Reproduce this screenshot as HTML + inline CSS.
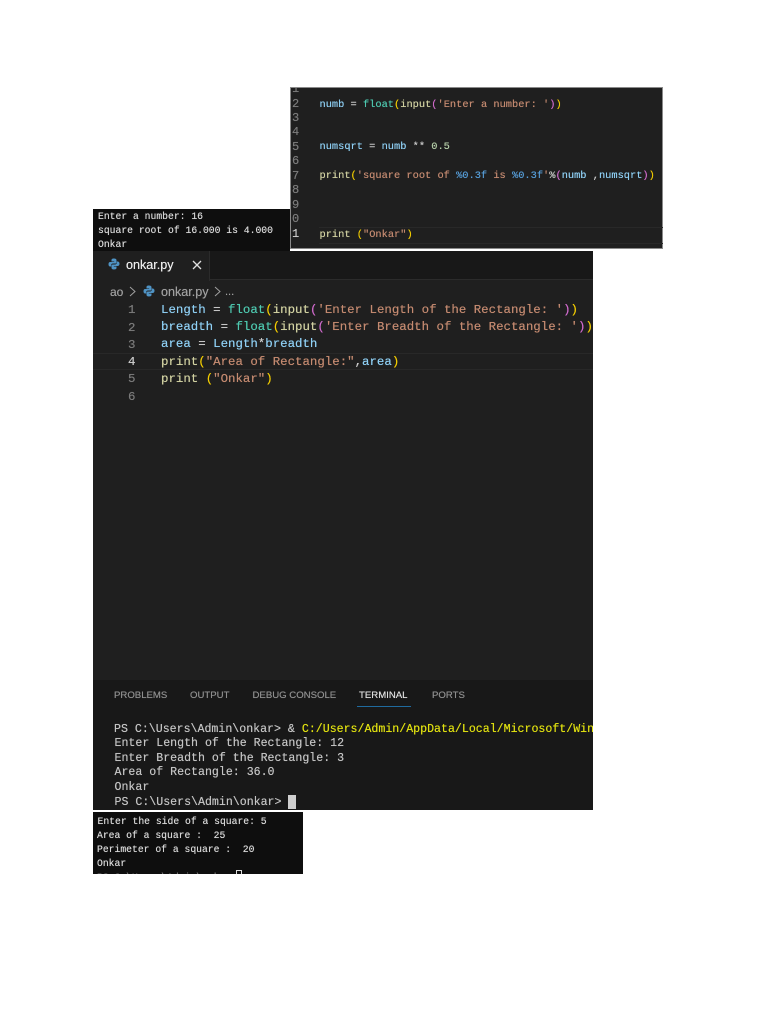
<!DOCTYPE html>
<html><head><meta charset="utf-8">
<style>
html,body{margin:0;padding:0;background:#fff;width:768px;height:1024px;overflow:hidden}
.b{position:absolute;overflow:hidden}
.l{position:absolute;white-space:pre;font-family:"Liberation Mono",monospace;line-height:16px;height:16px;text-shadow:0 0 .4px currentColor;filter:blur(.3px)}
.s{font-family:"Liberation Sans",sans-serif}
.c{font-size:12.42px}
.t{font-size:10.35px}
.tn{font-size:12px}
.k{font-size:9.72px;color:#d8d8d8}
.m{font-size:11.6px;color:#c4c4c4}
.n{color:#7a7a7a}
.v{color:#8fd0f5}.f{color:#d2d2a2}.g{color:#4ec9b0}.r{color:#c48a70}.y{color:#f2cc00}.p{color:#cf6acb}.w{color:#cccccc}.h{color:#b5cea8}.e{color:#569cd6}
</style></head><body>

<!-- top-left console -->
<div class="b" style="left:93px;top:209px;width:197px;height:42px;background:#0e0e0e"></div>
<div class="l k" style="left:98px;top:209px">Enter a number: 16</div>
<div class="l k" style="left:98px;top:223px">square root of 16.000 is 4.000</div>
<div class="l k" style="left:98px;top:237px">Onkar</div>

<!-- top code panel -->
<div class="b" style="left:290px;top:87px;width:373px;height:162px;background:#1f1f1f;box-shadow:inset 0 0 0 1px #8a8a8a">
<div class="b" style="left:29px;top:140px;width:344px;height:15px;border-top:1px solid #282828;border-bottom:1px solid #282828"></div>
<div class="b" style="left:1px;top:1px;width:372px;height:160px">
<div class="l tn n" style="left:1px;top:-7px">1</div>
<div class="l tn n" style="left:1px;top:8px">2</div>
<div class="l tn n" style="left:1px;top:22px">3</div>
<div class="l tn n" style="left:1px;top:36px">4</div>
<div class="l tn n" style="left:1px;top:51px">5</div>
<div class="l tn n" style="left:1px;top:65px">6</div>
<div class="l tn n" style="left:1px;top:80px">7</div>
<div class="l tn n" style="left:1px;top:94px">8</div>
<div class="l tn n" style="left:1px;top:109px">9</div>
<div class="l tn n" style="left:1px;top:123px">0</div>
<div class="l tn" style="left:1px;top:138px;color:#ccc">1</div>
<div class="l t" style="left:28.5px;top:9px"><span class="v">numb</span><span class="w"> = </span><span class="g">float</span><span class="y">(</span><span class="f">input</span><span class="p">(</span><span class="r">'Enter a number: '</span><span class="p">)</span><span class="y">)</span></div>
<div class="l t" style="left:28.5px;top:51px"><span class="v">numsqrt</span><span class="w"> = </span><span class="v">numb</span><span class="w"> ** </span><span class="h">0.5</span></div>
<div class="l t" style="left:28.5px;top:80px"><span class="f">print</span><span class="y">(</span><span class="r">'square root of </span><span class="e">%0.3f</span><span class="r"> is </span><span class="e">%0.3f</span><span class="r">'</span><span class="w">%</span><span class="p">(</span><span class="v">numb</span><span class="w"> ,</span><span class="v">numsqrt</span><span class="p">)</span><span class="y">)</span></div>
<div class="l t" style="left:28.5px;top:139px"><span class="f">print</span><span class="w"> </span><span class="y">(</span><span class="r">"Onkar"</span><span class="y">)</span></div>
</div>
</div>

<!-- main editor -->
<div class="b" style="left:93px;top:251px;width:500px;height:559px;background:#1f1f1f">
<div class="b" style="left:0;top:0;width:500px;height:29px;background:#181818;border-bottom:1px solid #2b2b2b;box-sizing:border-box"></div>
<div class="b" style="left:0;top:0;width:117px;height:30px;background:#1f1f1f;border-right:1px solid #2b2b2b;box-sizing:border-box"></div>
<svg class="b" style="left:15px;top:7px" width="12" height="12" viewBox="0 0 12 12"><path d="M6 .5C4 .5 3.5 1.2 3.5 2.2V3.5H6.2V4H2.2C1 4 .5 5 .5 6.2S1 8.5 2.2 8.5H3.2V7.2C3.2 6 4 5.5 5 5.5H7.2C8 5.5 8.5 5 8.5 4.2V2.2C8.5 1.2 7.8.5 6 .5Z" fill="#4f93c4"/><path d="M6 11.5C8 11.5 8.5 10.8 8.5 9.8V8.5H5.8V8H9.8C11 8 11.5 7 11.5 5.8S11 3.5 9.8 3.5H8.8V4.8C8.8 6 8 6.5 7 6.5H4.8C4 6.5 3.5 7 3.5 7.8V9.8C3.5 10.8 4.2 11.5 6 11.5Z" fill="#4f93c4"/></svg>
<div class="l s" style="left:33px;top:6px;font-size:12.6px;color:#eeeeee">onkar.py</div>
<svg class="b" style="left:99px;top:9px" width="10" height="10" viewBox="0 0 10 10"><path d="M1 1L9 9M9 1L1 9" stroke="#e0e0e0" stroke-width="1.3" fill="none"/></svg>

<div class="l s" style="left:17px;top:33px;font-size:12px;color:#a0a0a0">ao</div>
<svg class="b" style="left:36px;top:35px" width="7" height="11" viewBox="0 0 7 11"><path d="M1 1L6 5.5L1 10" stroke="#a0a0a0" stroke-width="1" fill="none"/></svg>
<svg class="b" style="left:50px;top:34px" width="12" height="12" viewBox="0 0 12 12"><path d="M6 .5C4 .5 3.5 1.2 3.5 2.2V3.5H6.2V4H2.2C1 4 .5 5 .5 6.2S1 8.5 2.2 8.5H3.2V7.2C3.2 6 4 5.5 5 5.5H7.2C8 5.5 8.5 5 8.5 4.2V2.2C8.5 1.2 7.8.5 6 .5Z" fill="#4f93c4"/><path d="M6 11.5C8 11.5 8.5 10.8 8.5 9.8V8.5H5.8V8H9.8C11 8 11.5 7 11.5 5.8S11 3.5 9.8 3.5H8.8V4.8C8.8 6 8 6.5 7 6.5H4.8C4 6.5 3.5 7 3.5 7.8V9.8C3.5 10.8 4.2 11.5 6 11.5Z" fill="#4f93c4"/></svg>
<div class="l s" style="left:68px;top:33px;font-size:12.6px;color:#a0a0a0">onkar.py</div>
<svg class="b" style="left:121px;top:35px" width="7" height="11" viewBox="0 0 7 11"><path d="M1 1L6 5.5L1 10" stroke="#a0a0a0" stroke-width="1" fill="none"/></svg>
<div class="l s" style="left:132px;top:33px;font-size:11px;color:#a0a0a0">...</div>

<div class="b" style="left:0;top:102px;width:500px;height:15px;border-top:1px solid #282828;border-bottom:1px solid #282828"></div>
<div class="l c n" style="left:35px;top:51px">1</div>
<div class="l c n" style="left:35px;top:69px">2</div>
<div class="l c n" style="left:35px;top:86px">3</div>
<div class="l c" style="left:35px;top:103px;color:#ccc">4</div>
<div class="l c n" style="left:35px;top:120px">5</div>
<div class="l c n" style="left:35px;top:138px">6</div>
<div class="l c" style="left:68px;top:51px"><span class="v">Length</span><span class="w"> = </span><span class="g">float</span><span class="y">(</span><span class="f">input</span><span class="p">(</span><span class="r">'Enter Length of the Rectangle: '</span><span class="p">)</span><span class="y">)</span></div>
<div class="l c" style="left:68px;top:68px"><span class="v">breadth</span><span class="w"> = </span><span class="g">float</span><span class="y">(</span><span class="f">input</span><span class="p">(</span><span class="r">'Enter Breadth of the Rectangle: '</span><span class="p">)</span><span class="y">)</span></div>
<div class="l c" style="left:68px;top:85px"><span class="v">area</span><span class="w"> = </span><span class="v">Length</span><span class="w">*</span><span class="v">breadth</span></div>
<div class="l c" style="left:68px;top:103px"><span class="f">print</span><span class="y">(</span><span class="r">"Area of Rectangle:"</span><span class="w">,</span><span class="v">area</span><span class="y">)</span></div>
<div class="l c" style="left:68px;top:120px"><span class="f">print</span><span class="w"> </span><span class="y">(</span><span class="r">"Onkar"</span><span class="y">)</span></div>

<!-- terminal -->
<div class="b" style="left:0;top:429px;width:500px;height:130px;background:#181818"></div>
<div class="l s" style="left:21px;top:437px;font-size:9.6px;color:#8f8f8f">PROBLEMS</div>
<div class="l s" style="left:97px;top:437px;font-size:9.6px;color:#8f8f8f">OUTPUT</div>
<div class="l s" style="left:159.5px;top:437px;font-size:9.6px;color:#8f8f8f">DEBUG CONSOLE</div>
<div class="l s" style="left:266px;top:437px;font-size:9.6px;color:#e0e0e0">TERMINAL</div>
<div class="l s" style="left:339px;top:437px;font-size:9.6px;color:#8f8f8f">PORTS</div>
<div class="b" style="left:264px;top:455px;width:54px;height:1px;background:#1f6a9e"></div>
<div class="l m" style="left:21px;top:471px">PS C:\Users\Admin\onkar&gt; &amp; <span style="color:#e0e010">C:/Users/Admin/AppData/Local/Microsoft/WindowsApps</span></div>
<div class="l m" style="left:21.5px;top:485px">Enter Length of the Rectangle: 12</div>
<div class="l m" style="left:21.5px;top:500px">Enter Breadth of the Rectangle: 3</div>
<div class="l m" style="left:21.5px;top:514px">Area of Rectangle: 36.0</div>
<div class="l m" style="left:21.5px;top:529px">Onkar</div>
<div class="l m" style="left:21.5px;top:544px">PS C:\Users\Admin\onkar&gt;</div>
<div class="b" style="left:195px;top:544px;width:8px;height:14px;background:#cfcfcf"></div>
</div>

<!-- bottom console -->
<div class="b" style="left:93px;top:812px;width:210px;height:62px;background:#0e0e0e">
<div class="l k" style="left:4.5px;top:2px">Enter the side of a square: 5</div>
<div class="l k" style="left:4px;top:16px">Area of a square :  25</div>
<div class="l k" style="left:4px;top:30px">Perimeter of a square :  20</div>
<div class="l k" style="left:4px;top:44px">Onkar</div>
<div class="l k" style="left:4px;top:58px;color:#777">PS C:\Users\Admin\onkar&gt;</div>
<div class="b" style="left:143px;top:58px;width:6px;height:4px;border:1px solid #ddd;border-bottom:0;box-sizing:border-box"></div>
</div>
</body></html>
